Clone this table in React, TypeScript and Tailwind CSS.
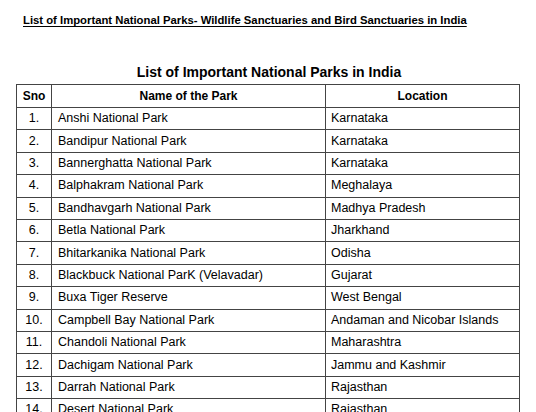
import React from "react";

// 国立公園の一覧データ
const parks: [string, string][] = [
  ["Anshi National Park", "Karnataka"],
  ["Bandipur National Park", "Karnataka"],
  ["Bannerghatta National Park", "Karnataka"],
  ["Balphakram National Park", "Meghalaya"],
  ["Bandhavgarh National Park", "Madhya Pradesh"],
  ["Betla National Park", "Jharkhand"],
  ["Bhitarkanika National Park", "Odisha"],
  ["Blackbuck National ParK (Velavadar)", "Gujarat"],
  ["Buxa Tiger Reserve", "West Bengal"],
  ["Campbell Bay National Park", "Andaman and Nicobar Islands"],
  ["Chandoli National Park", "Maharashtra"],
  ["Dachigam National Park", "Jammu and Kashmir"],
  ["Darrah National Park", "Rajasthan"],
  ["Desert National Park", "Rajasthan"],
];

const App: React.FC = () => {
  return (
    <div
      className="w-[536px] h-[412px] overflow-hidden bg-white text-black"
      style={{ fontFamily: '"Liberation Sans", Arial, sans-serif' }}
    >
      {/* ページタイトル */}
      <div className="pl-[23px] pt-[7px] h-[64px]">
        <span className="text-[11.3px] font-bold underline underline-offset-2 leading-[14px]">
          List of Important National Parks- Wildlife Sanctuaries and Bird Sanctuaries in India
        </span>
      </div>

      {/* 表の見出し */}
      <div className="h-[20px] flex justify-center items-start pl-[2px]">
        <span className="text-[14px] font-bold leading-[16px]">
          List of Important National Parks in India
        </span>
      </div>

      {/* 一覧表 */}
      <table className="ml-[16px] border-collapse table-fixed w-[503px] text-[12.5px]">
        <colgroup>
          <col className="w-[35px]" />
          <col className="w-[274px]" />
          <col className="w-[194px]" />
        </colgroup>
        <thead>
          <tr className="h-[23px] text-[12px]">
            <th className="border border-[#444] font-bold text-center">Sno</th>
            <th className="border border-[#444] font-bold text-center">Name of the Park</th>
            <th className="border border-[#444] font-bold text-center">Location</th>
          </tr>
        </thead>
        <tbody>
          {parks.map(([name, loc], i) => (
            <tr key={name} className="h-[22.4px]">
              <td className="border border-[#444] text-center">{i + 1}.</td>
              <td className="border border-[#444] pl-[6px]">{name}</td>
              <td className="border border-[#444] pl-[5px]">{loc}</td>
            </tr>
          ))}
        </tbody>
      </table>
    </div>
  );
};

export default App;
